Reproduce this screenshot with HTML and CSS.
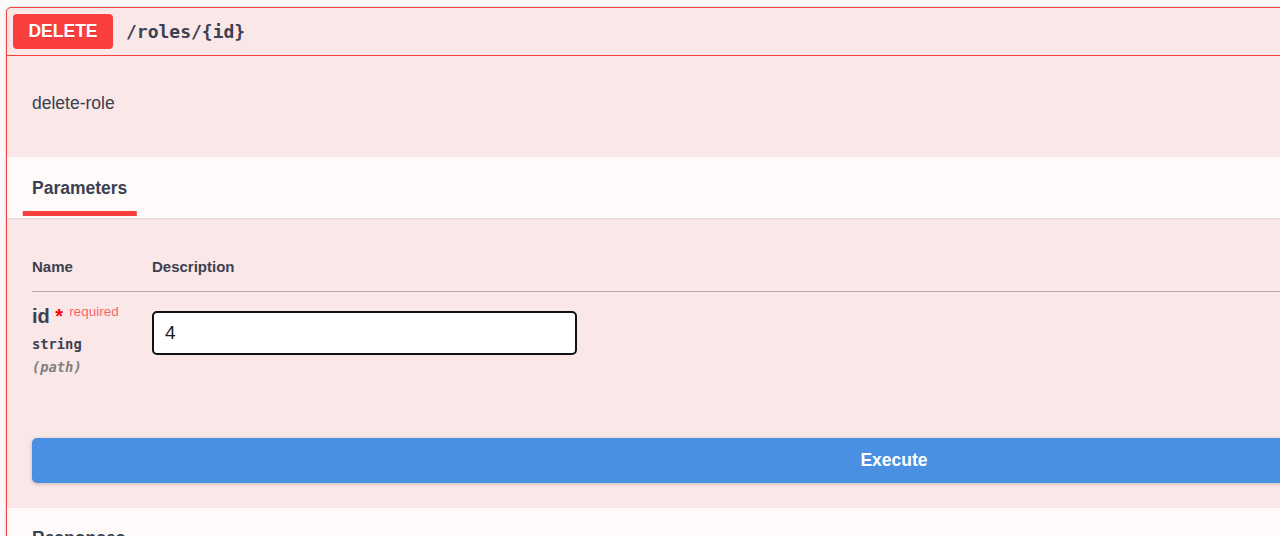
FILE: index.html
```html
<!DOCTYPE html>
<html lang="en">
<head>
<meta charset="utf-8">
<title>DELETE /roles/{id}</title>
<link rel="stylesheet" href="styles.css">
</head>
<body>
<div class="opblock">
  <div class="summary">
    <span class="method">DELETE</span>
    <span class="path">/roles/{id}</span>
  </div>
  <div class="opbody">
    <div class="desc"><p>delete-role</p></div>
    <div class="section-header">
      <div class="tab"><h4><span class="tab-label">Parameters</span></h4></div>
    </div>
    <div class="table-container">
      <table class="params">
        <thead>
          <tr><th class="col-name">Name</th><th>Description</th></tr>
        </thead>
        <tbody>
          <tr>
            <td class="col-name">
              <div class="pname">id<span class="star">&nbsp;*</span><span class="req">required</span></div>
              <div class="ptype">string</div>
              <div class="pin">(path)</div>
            </td>
            <td class="col-desc"><input class="pinput" type="text" value="4"></td>
          </tr>
        </tbody>
      </table>
    </div>
    <div class="execute-wrapper"><button class="execute">Execute</button></div>
    <div class="section-header resp"><h4>Responses</h4></div>
  </div>
</div>
</body>
</html>
```

FILE: styles.css
```css
html, body {
  margin: 0;
  padding: 0;
}
body {
  background: #fafafa;
  overflow: hidden;
  padding: 7px 0 0 6px;
  font-family: "Liberation Sans", Arial, sans-serif;
  color: #3b4151;
}
.opblock {
  width: 1774px;
  border: 1px solid #f93e3e;
  border-radius: 5px;
  background: #fae7e7;
  box-shadow: 0 0 3px rgba(0,0,0,.19);
}
.summary {
  display: flex;
  align-items: center;
  padding: 6px;
  border-bottom: 1px solid #f93e3e;
}
.method {
  min-width: 100px;
  height: 35px;
  box-sizing: border-box;
  display: flex;
  align-items: center;
  justify-content: center;
  background: #f93e3e;
  color: #fff;
  font-weight: 700;
  font-size: 17.5px;
  border-radius: 4px;
  text-shadow: 0 1px 0 rgba(0,0,0,.1);
}
.path {
  padding-left: 13px;
  font-family: "DejaVu Sans Mono", "Liberation Mono", monospace;
  font-weight: 700;
  font-size: 18px;
  color: #3b4151;
}
.desc {
  height: 101px;
  box-sizing: border-box;
  padding: 37px 25px 0;
}
.desc p {
  margin: 0;
  font-size: 17.5px;
  line-height: 20px;
}
.section-header {
  height: 61px;
  box-sizing: border-box;
  padding: 0 25px;
  display: flex;
  align-items: center;
  background: rgba(255,255,255,.8);
  box-shadow: 0 1px 2px rgba(0,0,0,.1);
}
.tab h4 {
  margin: 0;
  font-size: 17.5px;
  font-weight: 700;
  line-height: 20px;
}
.tab-label {
  position: relative;
  display: inline-block;
}
.tab-label::after {
  content: "";
  position: absolute;
  left: 50%;
  transform: translateX(-50%);
  width: 120%;
  height: 5px;
  bottom: -18px;
  background: #f93e3e;
}
.table-container {
  padding: 25px 25px 49px;
}
.params {
  border-collapse: collapse;
  width: 100%;
}
.params th {
  text-align: left;
  font-size: 15px;
  font-weight: 700;
  line-height: 18px;
  padding: 15px 0;
  border-bottom: 1px solid rgba(59,65,81,.2);
}
.col-name {
  width: 120px;
}
.params td {
  vertical-align: top;
  padding: 12.5px 0;
}
.pname {
  font-size: 20px;
  font-weight: 700;
  line-height: 23px;
}
.star {
  color: red;
}
.req {
  color: rgba(255,0,0,.6);
  font-size: 13.5px;
  font-weight: 400;
  position: relative;
  top: -7px;
  padding-left: 6px;
}
.ptype {
  font-family: "DejaVu Sans Mono", "Liberation Mono", monospace;
  font-weight: 700;
  font-size: 13.75px;
  line-height: 17px;
  padding: 6px 0 6.5px;
}
.pin {
  font-family: "DejaVu Sans Mono", "Liberation Mono", monospace;
  font-style: italic;
  font-weight: 700;
  font-size: 13.75px;
  line-height: 17px;
  color: #808080;
}
.pinput {
  display: block;
  box-sizing: border-box;
  width: 425px;
  height: 44px;
  margin-top: 6px;
  padding: 0 11px;
  border: 2px solid #111;
  border-radius: 5px;
  background: #fff;
  font-family: "Liberation Sans", Arial, sans-serif;
  font-size: 19px;
  color: #1b1b1b;
  outline: none;
}
.execute-wrapper {
  padding: 0 25px 25px;
}
.execute {
  display: block;
  width: 100%;
  height: 45px;
  border: 2px solid #4990e2;
  border-radius: 5px;
  background: #4990e2;
  color: #fff;
  font-family: "Liberation Sans", Arial, sans-serif;
  font-size: 17.5px;
  font-weight: 700;
  box-shadow: 0 1px 4px rgba(0,0,0,.2);
}
.resp {
  align-items: flex-start;
  padding-top: 20px;
}
.resp h4 {
  margin: 0;
  font-size: 17.5px;
  font-weight: 700;
  line-height: 20px;
}
```
